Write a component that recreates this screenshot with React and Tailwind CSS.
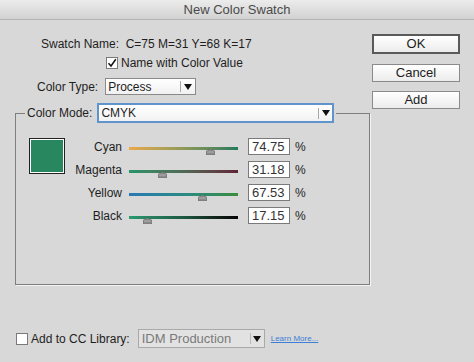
import React from 'react';

const font = "font-['Liberation_Sans',Arial,sans-serif]";

const Arrow = () => (
  <svg width="8" height="6" viewBox="0 0 8 6" className="block">
    <polygon points="0,0 8,0 4,6" fill="#111" />
  </svg>
);

const Thumb = ({ pct }) => (
  <svg
    width="9"
    height="6"
    viewBox="0 0 9 6"
    className="absolute top-[-1px]"
    style={{ left: `calc(${pct}% - 4.5px)` }}
  >
    <polygon points="0,6 0,2.5 4.5,0 9,2.5 9,6" fill="#8b8b8b" stroke="#6f6f6f" strokeWidth="0.8" />
    <rect x="1" y="2.5" width="7" height="1" fill="#b0b0b0" />
  </svg>
);

const rows = [
  { label: 'Cyan', value: '74.75', grad: 'bg-gradient-to-r from-[#eaa84a] via-[#8e9a58] to-[#1f7a5c]' },
  { label: 'Magenta', value: '31.18', grad: 'bg-gradient-to-r from-[#23946a] via-[#4f6a58] to-[#5e2438]' },
  { label: 'Yellow', value: '67.53', grad: 'bg-gradient-to-r from-[#2a78b4] via-[#2b8a84] to-[#3a8c3c]' },
  { label: 'Black', value: '17.15', grad: 'bg-gradient-to-r from-[#2a9a70] via-[#1d5a42] to-[#050505]' },
];

const Button = ({ children, main }) => (
  <button
    className={`w-[88px] flex items-center justify-center bg-gradient-to-b from-[#ffffff] to-[#ececec] text-[13px] text-[#1c1c1c] ${
      main ? 'h-[20px] border-2 border-[#5a5a5a]' : 'h-[18px] border border-[#8a8a8a]'
    }`}
  >
    {children}
  </button>
);

export default function App() {
  return (
    <div className={`w-[474px] h-[362px] bg-[#d8d8d8] text-[#1e1e1e] ${font} flex flex-col overflow-hidden`}>
      {/* Title bar */}
      <div className="h-[20px] shrink-0 flex items-center justify-center bg-gradient-to-b from-[#ececec] to-[#d2d2d2] border-b border-[#b4b4b4] text-[13px] text-[#4a4a4a]">
        New Color Swatch
      </div>

      <div className="flex pl-[15px] pt-[13px]">
        {/* Left column */}
        <div className="w-[355px] flex flex-col">
          <div className="ml-[26px] h-[14px] flex items-center text-[12px] leading-none mt-[4px]">
            Swatch Name:&nbsp; C=75 M=31 Y=68 K=17
          </div>

          <div className="ml-[91px] mt-[6px] h-[12px] flex items-center gap-[3px] text-[12px] leading-none">
            <div className="w-[12px] h-[12px] bg-white border border-[#7a7a7a] flex items-center justify-center">
              <svg width="10" height="10" viewBox="0 0 10 10">
                <path d="M1.5 5.2 L4 8 L8.8 1.2" stroke="#111" strokeWidth="1.5" fill="none" />
              </svg>
            </div>
            <span>Name with Color Value</span>
          </div>

          <div className="ml-[22px] mt-[9px] flex items-center gap-[7px] text-[12px] leading-none">
            <span>Color Type:</span>
            <div className="w-[91px] h-[17px] border border-[#8a8a8a] bg-gradient-to-b from-white to-[#f1f1f1] flex items-center">
              <span className="flex-1 pl-[2px] text-[12px]">Process</span>
              <div className="w-px h-[11px] bg-[#a8a8a8]" />
              <div className="w-[14px] flex justify-center">
                <Arrow />
              </div>
            </div>
          </div>

          <fieldset className="mt-[8px] h-[182px] border border-[#7e7e7e] shadow-[1px_1px_0_#f4f4f4]">
            <legend className="ml-[9px] px-[2px]">
              <div className="flex items-center gap-[5px] text-[12px] leading-none">
                <span>Color Mode:</span>
                <div className="w-[237px] h-[20px] border-2 border-[#5f95cc] bg-gradient-to-b from-white to-[#f2f2f2] flex items-center">
                  <span className="flex-1 pl-[2px] text-[12px]">CMYK</span>
                  <div className="w-px h-[11px] bg-[#a8a8a8]" />
                  <div className="w-[13px] flex justify-center">
                    <Arrow />
                  </div>
                </div>
              </div>
            </legend>

            <div className="flex ml-[13px] mt-[15px]">
              <div className="w-[36px] h-[36px] border border-[#222] p-px bg-white shrink-0">
                <div className="w-full h-full bg-[#28875f]" />
              </div>

              <div className="flex flex-col gap-[6px]">
                {rows.map((r) => (
                  <div key={r.label} className="flex items-center h-[17px] text-[12px] leading-none">
                    <span className="w-[57px] text-right">{r.label}</span>
                    <div className="relative ml-[7px] w-[109px] h-[17px] pt-[9px]">
                      <div className={`h-[3px] ${r.grad}`} />
                      <div className="relative">
                        <Thumb pct={parseFloat(r.value)} />
                      </div>
                    </div>
                    <div className="ml-[10px] w-[42px] h-[17px] bg-white border border-[#7a7a7a] flex items-center pl-[3px] text-[13px] text-[#333]">
                      {r.value}
                    </div>
                    <span className="ml-[5px] text-[12px]">%</span>
                  </div>
                ))}
              </div>
            </div>
          </fieldset>
        </div>

        {/* Right column */}
        <div className="ml-[2px] flex flex-col items-start">
          <div className="mt-[1px]">
            <Button main>OK</Button>
          </div>
          <div className="mt-[10px]">
            <Button>Cancel</Button>
          </div>
          <div className="mt-[9px]">
            <Button>Add</Button>
          </div>
        </div>
      </div>

      {/* Bottom row */}
      <div className="mt-[44px] ml-[16px] flex items-center text-[12px] leading-none">
        <div className="w-[12px] h-[12px] bg-white border border-[#7a7a7a]" />
        <span className="ml-[3px]">Add to CC Library:</span>
        <div className="ml-[8px] w-[127px] h-[19px] border border-[#a9a9a9] bg-[#e2e2e2] flex items-center">
          <span className="flex-1 pl-[3px] text-[13px] text-[#7a7a7a]">IDM Production</span>
          <div className="w-px h-[11px] bg-[#b8b8b8]" />
          <div className="w-[13px] flex justify-center">
            <Arrow />
          </div>
        </div>
        <span className="ml-[6px] text-[8px] text-[#3d7fd6] underline">Learn More...</span>
      </div>
    </div>
  );
}
